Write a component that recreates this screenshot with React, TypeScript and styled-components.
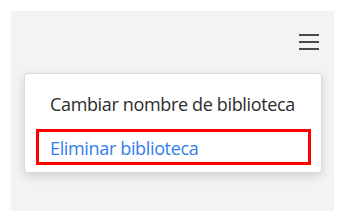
import React from "react";
import styled, { createGlobalStyle } from "styled-components";

const Global = createGlobalStyle`
  html, body { margin: 0; padding: 0; background: #ffffff; }
  body { padding: 11px; font-family: "Open Sans", "Liberation Sans", sans-serif; }
`;

const Panel = styled.div`
  width: 323px;
  height: 200px;
  background: #f3f3f3;
  box-sizing: border-box;
  padding: 22px 12px 0 13px;
  display: flex;
  flex-direction: column;
`;

const Toolbar = styled.div`
  display: flex;
  justify-content: flex-end;
  height: 40px;
`;

const MenuButton = styled.button`
  border: 0;
  background: transparent;
  padding: 0;
  width: 22px;
  height: 20px;
  margin-right: 2px;
  display: flex;
  align-items: flex-start;
  justify-content: center;
`;

const Menu = styled.div`
  width: 298px;
  height: 100px;
  box-sizing: border-box;
  background: #ffffff;
  border: 1px solid #dadada;
  border-radius: 4px;
  box-shadow: 0 3px 10px rgba(0, 0, 0, 0.14);
  padding: 12px 10px 0 11px;
  display: flex;
  flex-direction: column;
`;

const Item = styled.div<{ $active?: boolean }>`
  height: 36px;
  box-sizing: border-box;
  display: flex;
  align-items: center;
  padding-left: ${(p) => (p.$active ? "11px" : "14px")};
  padding-top: ${(p) => (p.$active ? "1px" : "0")};
  font-size: 18px;
  letter-spacing: -0.35px;
  color: ${(p) => (p.$active ? "#2f80ed" : "#2c2c2c")};
  border: ${(p) => (p.$active ? "3px solid #ff0000" : "0")};
  margin-top: ${(p) => (p.$active ? "7px" : "0")};
  white-space: nowrap;
`;

export default function App() {
  return (
    <>
      <Global />
      <Panel>
        <Toolbar>
          <MenuButton aria-label="menu">
            <svg width="20" height="18" viewBox="0 0 20 18">
              <rect x="0" y="1" width="20" height="2" fill="#4a4a4a" />
              <rect x="0" y="8" width="20" height="2" fill="#4a4a4a" />
              <rect x="0" y="15" width="20" height="2" fill="#4a4a4a" />
            </svg>
          </MenuButton>
        </Toolbar>
        <Menu>
          <Item>Cambiar nombre de biblioteca</Item>
          <Item $active>Eliminar biblioteca</Item>
        </Menu>
      </Panel>
    </>
  );
}
